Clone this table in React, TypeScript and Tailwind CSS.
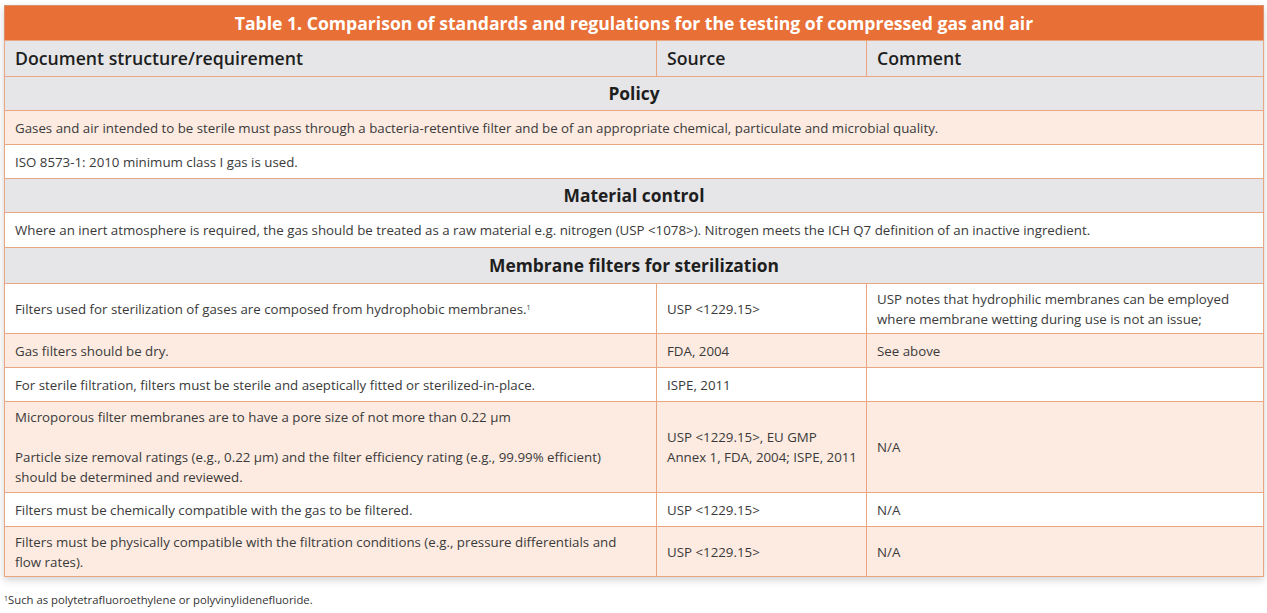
import React from "react";

type Row = {
  req: React.ReactNode;
  source?: React.ReactNode;
  comment?: React.ReactNode;
  tone: "pink" | "white";
  h: string;
};

const cell = "border border-[#e8a682] px-[10px] align-middle text-[13.3px] leading-[20px] text-[#3a3a3a]";

function Section({ title, h = "h-[34px]" }: { title: string; h?: string }) {
  return (
    <tr className={`${h} bg-[#e6e6e8]`}>
      <td colSpan={3} className="border border-[#e8a682] text-center text-[17.4px] font-bold text-[#1e1e1e]">
        {title}
      </td>
    </tr>
  );
}

function Body({ row }: { row: Row }) {
  const bg = row.tone === "pink" ? "bg-[#fdebe1]" : "bg-white";
  if (row.source === undefined) {
    return (
      <tr className={`${row.h} ${bg}`}>
        <td colSpan={3} className={cell}>
          {row.req}
        </td>
      </tr>
    );
  }
  return (
    <tr className={`${row.h} ${bg}`}>
      <td className={cell}>{row.req}</td>
      <td className={`${cell} whitespace-nowrap`}>{row.source}</td>
      <td className={cell}>{row.comment}</td>
    </tr>
  );
}

const membraneRows: Row[] = [
  {
    req: (
      <>
        Filters used for sterilization of gases are composed from hydrophobic membranes.
        <sup className="text-[7px]">1</sup>
      </>
    ),
    source: "USP <1229.15>",
    comment: (
      <>
        USP notes that hydrophilic membranes can be employed
        <br />
        where membrane wetting during use is not an issue;
      </>
    ),
    tone: "white",
    h: "h-[50px]",
  },
  { req: "Gas filters should be dry.", source: "FDA, 2004", comment: "See above", tone: "pink", h: "h-[34px]" },
  {
    req: "For sterile filtration, filters must be sterile and aseptically fitted or sterilized-in-place.",
    source: "ISPE, 2011",
    comment: "",
    tone: "white",
    h: "h-[34px]",
  },
  {
    req: (
      <>
        <p>Microporous filter membranes are to have a pore size of not more than 0.22 µm</p>
        <p className="mt-[20px]">
          Particle size removal ratings (e.g., 0.22 µm) and the filter efficiency rating (e.g., 99.99% efficient)
          <br />
          should be determined and reviewed.
        </p>
      </>
    ),
    source: (
      <>
        USP &lt;1229.15&gt;, EU GMP
        <br />
        Annex 1, FDA, 2004; ISPE, 2011
      </>
    ),
    comment: "N/A",
    tone: "pink",
    h: "h-[91px]",
  },
  {
    req: "Filters must be chemically compatible with the gas to be filtered.",
    source: "USP <1229.15>",
    comment: "N/A",
    tone: "white",
    h: "h-[34px]",
  },
  {
    req: (
      <>
        Filters must be physically compatible with the filtration conditions (e.g., pressure differentials and
        <br />
        flow rates).
      </>
    ),
    source: "USP <1229.15>",
    comment: "N/A",
    tone: "pink",
    h: "h-[50px]",
  },
];

export default function App() {
  return (
    <div className="min-h-[613px] bg-white pl-[4px] pt-[5px] font-['Open_Sans',Arial,sans-serif]">
      <div className="w-[1260px] shadow-[0_3px_8px_rgba(0,0,0,0.18)]">
        <table className="w-full table-fixed border-collapse border border-[#d9906b]">
          <colgroup>
            <col className="w-[652px]" />
            <col className="w-[210px]" />
            <col />
          </colgroup>
          <tbody>
            <tr className="h-[35px] bg-[#e86f35]">
              <td colSpan={3} className="text-center text-[17.6px] font-bold text-white">
                Table 1. Comparison of standards and regulations for the testing of compressed gas and air
              </td>
            </tr>
            <tr className="h-[36px] bg-[#e6e6e8] text-[17.7px] font-semibold text-[#1e1e1e]">
              <td className="border border-[#e8a682] px-[10px]">Document structure/requirement</td>
              <td className="border border-[#e8a682] px-[10px]">Source</td>
              <td className="border border-[#e8a682] px-[10px]">Comment</td>
            </tr>
            <Section title="Policy" />
            <Body
              row={{
                req: "Gases and air intended to be sterile must pass through a bacteria-retentive filter and be of an appropriate chemical, particulate and microbial quality.",
                tone: "pink",
                h: "h-[34px]",
              }}
            />
            <Body row={{ req: "ISO 8573-1: 2010 minimum class I gas is used.", tone: "white", h: "h-[34px]" }} />
            <Section title="Material control" />
            <Body
              row={{
                req: "Where an inert atmosphere is required, the gas should be treated as a raw material e.g. nitrogen (USP <1078>). Nitrogen meets the ICH Q7 definition of an inactive ingredient.",
                tone: "white",
                h: "h-[35px]",
              }}
            />
            <Section title="Membrane filters for sterilization" h="h-[36px]" />
            {membraneRows.map((r, i) => (
              <Body key={i} row={r} />
            ))}
          </tbody>
        </table>
      </div>
      <p className="mt-[15px] text-[11.3px] text-[#333]">
        <sup className="text-[7px]">1</sup>Such as polytetrafluoroethylene or polyvinylidenefluoride.
      </p>
    </div>
  );
}
